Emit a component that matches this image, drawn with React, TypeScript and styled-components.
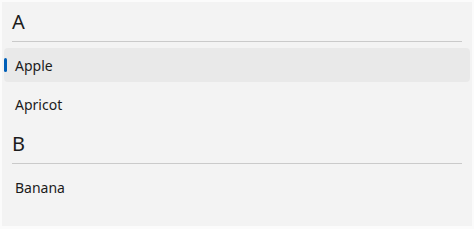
import React from "react";
import styled, { createGlobalStyle } from "styled-components";

const GlobalStyle = createGlobalStyle`
    html, body {
        margin: 0;
        padding: 0;
        background: #fbfbfb;
    }
    body {
        font-family: "Noto Sans", "Open Sans", sans-serif;
        color: #1b1b1b;
    }
`;

type Group = { key: string; items: string[] };

const groups: Group[] = [
    { key: "A", items: ["Apple", "Apricot"] },
    { key: "B", items: ["Banana"] },
];

export default function App() {
    const selected = "Apple";
    return (
        <>
            <GlobalStyle />
            <Panel>
                {groups.map((g) => (
                    <GroupWrap key={g.key}>
                        <GroupHeader>{g.key}</GroupHeader>
                        <ItemList>
                            {g.items.map((item) => (
                                <Item key={item} $selected={item === selected}>
                                    {item === selected && <Indicator />}
                                    {item}
                                </Item>
                            ))}
                        </ItemList>
                    </GroupWrap>
                ))}
            </Panel>
        </>
    );
}

const Panel = styled.div`
    box-sizing: border-box;
    margin: 2px;
    width: 470px;
    height: 224px;
    background: #f3f3f3;
    padding: 4px 2px 0;
`;

const GroupWrap = styled.div`
    display: flex;
    flex-direction: column;
`;

const GroupHeader = styled.div`
    box-sizing: border-box;
    margin: 0 8px;
    height: 36px;
    padding-top: 2px;
    font-size: 20px;
    line-height: 28px;
    border-bottom: 1px solid #cacaca;
`;

const ItemList = styled.div`
    display: flex;
    flex-direction: column;
    gap: 5px;
    padding: 6px 0 7px;
`;

const Item = styled.div<{ $selected?: boolean }>`
    position: relative;
    height: 34px;
    display: flex;
    align-items: center;
    padding-left: 11px;
    font-size: 14px;
    border-radius: 4px;
    background: ${(p) => (p.$selected ? "#e9e9e9" : "transparent")};
`;

const Indicator = styled.span`
    position: absolute;
    left: 0;
    top: 10px;
    width: 3px;
    height: 14px;
    border-radius: 2px;
    background: #005fb8;
`;
